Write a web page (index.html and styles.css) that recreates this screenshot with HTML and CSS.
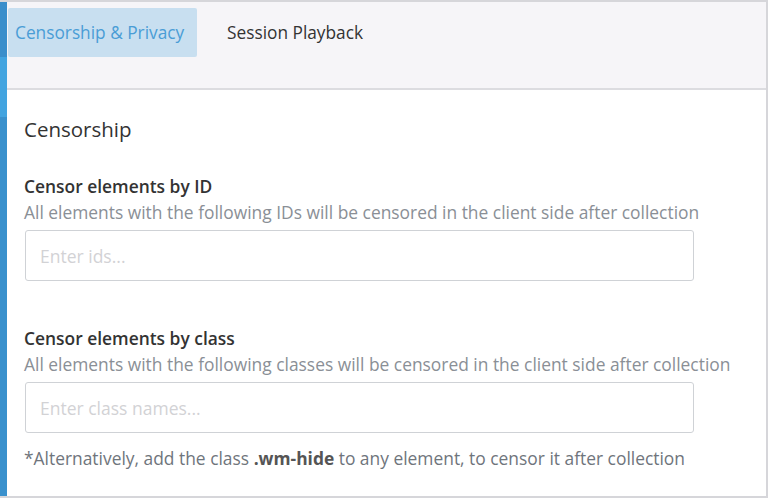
FILE: index.html
```html
<!DOCTYPE html>
<html>
<head>
<meta charset="utf-8">
<link rel="stylesheet" href="styles.css">
</head>
<body>
<div class="frame">
  <div class="stripe"></div>
  <div class="main">
    <nav class="tabs">
      <div class="tab active">Censorship &amp; Privacy</div>
      <div class="tab">Session Playback</div>
    </nav>
    <section class="content">
      <h2 class="heading">Censorship</h2>
      <div class="field">
        <div class="label">Censor elements by ID</div>
        <div class="desc">All elements with the following IDs will be censored in the client side after collection</div>
        <input class="input" type="text" placeholder="Enter ids...">
      </div>
      <div class="field second">
        <div class="label">Censor elements by class</div>
        <div class="desc">All elements with the following classes will be censored in the client side after collection</div>
        <input class="input" type="text" placeholder="Enter class names...">
        <div class="note">*Alternatively, add the class <b>.wm-hide</b> to any element, to censor it after collection</div>
      </div>
    </section>
  </div>
</div>
</body>
</html>
```
FILE: styles.css
```css
* { box-sizing: border-box; }
html, body { margin: 0; padding: 0; background: #fff; }
body {
  font-family: "Open Sans", "Noto Sans", sans-serif;
  color: #333;
  width: 768px;
  height: 498px;
  overflow: hidden;
}
.frame {
  display: flex;
  width: 768px;
  height: 498px;
  border-top: 2px solid #d6d6da;
  border-right: 2px solid #d6d6da;
  border-bottom: 2px solid #d6d6da;
}
.stripe {
  width: 7px;
  flex: none;
  background: linear-gradient(#3a8ecb 0, #3a8ecb 55px, #42a4e0 55px, #42a4e0 115px, #3a91cd 115px, #3a91cd 100%);
}
.main { flex: 1; display: flex; flex-direction: column; min-width: 0; }
.tabs {
  height: 88px;
  flex: none;
  background: #f6f5f8;
  border-bottom: 2px solid #dcdce0;
  display: flex;
  align-items: flex-start;
  padding: 6px 0 0 1px;
}
.tab {
  height: 49px;
  line-height: 49px;
  padding: 0 12px 0 7px;
  font-size: 17.3px;
  color: #333;
  border-radius: 2px;
  white-space: nowrap;
}
.tab.active {
  background: #c8dff0;
  color: #4a9dd6;
  width: 189px;
  margin-right: 23px;
}
.content { padding: 26px 0 0 17px; }
.heading {
  margin: 0;
  font-size: 20.5px;
  font-weight: 500;
  color: #333;
  line-height: 26px;
}
.field { margin-top: 31px; }
.field.second { margin-top: 44px; }
.label {
  font-size: 17.4px;
  font-weight: 600;
  line-height: 26px;
  color: #333;
}
.desc {
  font-size: 17.4px;
  line-height: 26px;
  color: #8a8f96;
  white-space: nowrap;
}
.input {
  display: block;
  margin: 5px 0 0 1px;
  width: 669px;
  height: 51px;
  border: 1.5px solid #cfd2d6;
  border-radius: 3px;
  padding: 0 14px;
  font-family: inherit;
  font-size: 17.5px;
  color: #333;
  outline: none;
}
.input::placeholder { color: #d2d2d5; }
.note {
  margin-top: 12px;
  font-size: 17.4px;
  line-height: 26px;
  color: #6f757c;
  white-space: nowrap;
}
.note b { font-weight: 700; color: #555; }
```
